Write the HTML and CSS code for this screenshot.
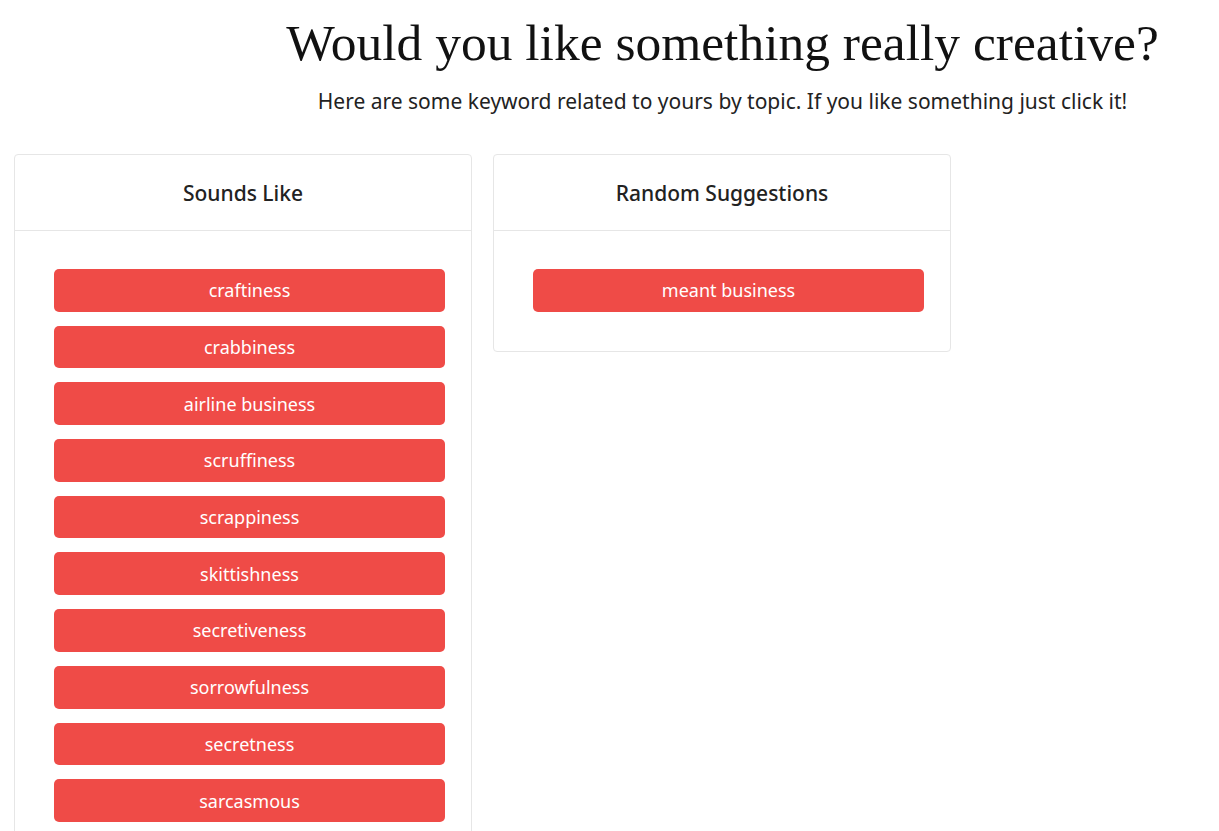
FILE: index.html
```html
<!DOCTYPE html>
<html lang="en">
<head>
<meta charset="utf-8">
<title>Keyword suggestions</title>
<link rel="stylesheet" href="styles.css">
</head>
<body>
<header class="hero">
  <h1 class="hero-title">Would you like something really creative?</h1>
  <p class="hero-sub">Here are some keyword related to yours by topic. If you like something just click it!</p>
</header>
<main class="cards">
  <section class="card">
    <div class="card-header">Sounds Like</div>
    <div class="card-body">
      <button class="kw">craftiness</button>
      <button class="kw">crabbiness</button>
      <button class="kw">airline business</button>
      <button class="kw">scruffiness</button>
      <button class="kw">scrappiness</button>
      <button class="kw">skittishness</button>
      <button class="kw">secretiveness</button>
      <button class="kw">sorrowfulness</button>
      <button class="kw">secretness</button>
      <button class="kw">sarcasmous</button>
    </div>
  </section>
  <section class="card">
    <div class="card-header">Random Suggestions</div>
    <div class="card-body">
      <button class="kw">meant business</button>
    </div>
  </section>
</main>
</body>
</html>
```

FILE: styles.css
```css
html, body {
  margin: 0;
  padding: 0;
  background: #fff;
}
body {
  font-family: "Noto Sans", "Open Sans", sans-serif;
  color: #212529;
  overflow: hidden;
  height: 831px;
}
.hero {
  padding-left: 226px;
  text-align: center;
  height: 154px;
  box-sizing: border-box;
  padding-top: 13px;
}
.hero-title {
  font-family: "Liberation Serif", "DejaVu Serif", serif;
  font-weight: 400;
  font-size: 51.5px;
  line-height: 60px;
  margin: 0;
  color: #111;
}
.hero-sub {
  margin: 14px 0 0;
  font-size: 21px;
  line-height: 28px;
  color: #222;
}
.cards {
  display: flex;
  align-items: flex-start;
  gap: 21px;
  padding-left: 14px;
}
.card {
  width: 458px;
  box-sizing: border-box;
  border: 1px solid #e6e6e6;
  border-radius: 4px;
  background: #fff;
}
.card-header {
  height: 76px;
  box-sizing: border-box;
  border-bottom: 1px solid #e6e6e6;
  display: flex;
  align-items: center;
  justify-content: center;
  font-size: 21px;
  font-weight: 500;
  color: #222;
}
.card-body {
  display: flex;
  flex-direction: column;
  gap: 14px;
  padding: 38px 26px 39px 39px;
}
.kw {
  display: block;
  width: 100%;
  height: 42.7px;
  border: 0;
  border-radius: 5px;
  background: #ef4b47;
  color: #fff;
  font-family: "Noto Sans", "Open Sans", sans-serif;
  font-size: 18px;
  padding: 0;
  cursor: pointer;
}
```
